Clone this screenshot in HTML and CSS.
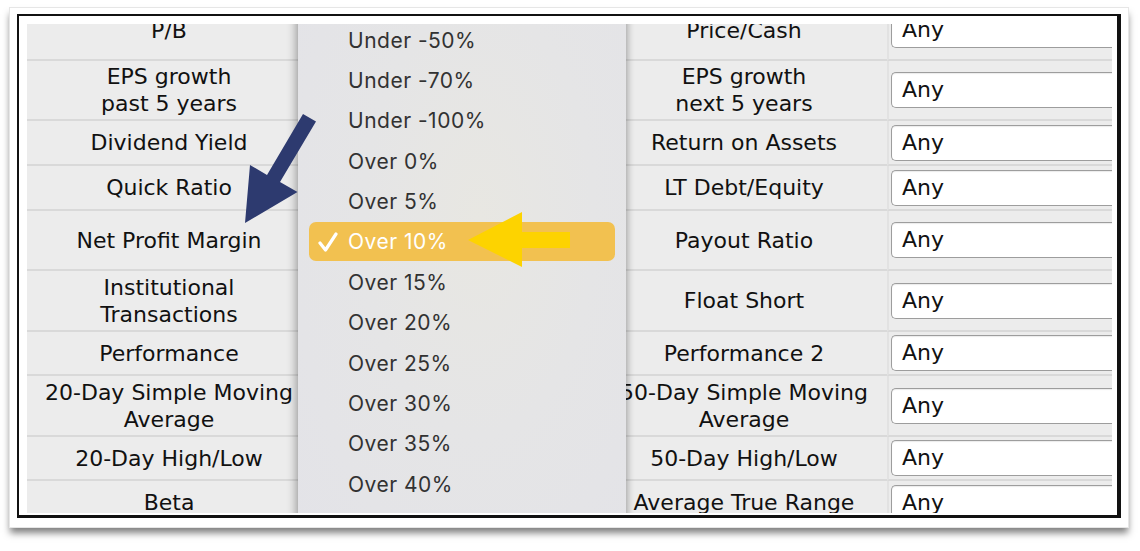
FILE: index.html
```html
<!DOCTYPE html>
<html>
<head>
<meta charset="utf-8">
<link rel="stylesheet" href="styles.css">
</head>
<body>
<div class="photo">
  <div class="frame">
    <div class="viewport">
      <div class="table">
        <div class="label">P/B</div><div class="pick"><div class="select"></div></div><div class="label">Price/Cash</div><div class="pick"><div class="select">Any</div></div>
        <div class="label">EPS growth<br>past 5 years</div><div class="pick"><div class="select"></div></div><div class="label">EPS growth<br>next 5 years</div><div class="pick"><div class="select">Any</div></div>
        <div class="label">Dividend Yield</div><div class="pick"><div class="select"></div></div><div class="label">Return on Assets</div><div class="pick"><div class="select">Any</div></div>
        <div class="label">Quick Ratio</div><div class="pick"><div class="select"></div></div><div class="label">LT Debt/Equity</div><div class="pick"><div class="select">Any</div></div>
        <div class="label">Net Profit Margin</div><div class="pick"><div class="select"></div></div><div class="label">Payout Ratio</div><div class="pick"><div class="select">Any</div></div>
        <div class="label">Institutional<br>Transactions</div><div class="pick"><div class="select"></div></div><div class="label">Float Short</div><div class="pick"><div class="select">Any</div></div>
        <div class="label">Performance</div><div class="pick"><div class="select"></div></div><div class="label">Performance 2</div><div class="pick"><div class="select">Any</div></div>
        <div class="label">20-Day Simple Moving<br>Average</div><div class="pick"><div class="select"></div></div><div class="label">50-Day Simple Moving<br>Average</div><div class="pick"><div class="select">Any</div></div>
        <div class="label">20-Day High/Low</div><div class="pick"><div class="select"></div></div><div class="label">50-Day High/Low</div><div class="pick"><div class="select">Any</div></div>
        <div class="label">Beta</div><div class="pick"><div class="select"></div></div><div class="label">Average True Range</div><div class="pick"><div class="select">Any</div></div>
      </div>

      <div class="menu">
        <div class="item">Under -50%</div>
        <div class="item">Under -70%</div>
        <div class="item">Under -100%</div>
        <div class="item">Over 0%</div>
        <div class="item">Over 5%</div>
        <div class="item selected"><svg class="check" viewBox="0 0 20 20" width="20" height="20"><path d="M2 11 L7.5 18 L18 2" fill="none" stroke="#fff" stroke-width="3.2" stroke-linecap="round" stroke-linejoin="round"/></svg>Over 10%</div>
        <div class="item">Over 15%</div>
        <div class="item">Over 20%</div>
        <div class="item">Over 25%</div>
        <div class="item">Over 30%</div>
        <div class="item">Over 35%</div>
        <div class="item">Over 40%</div>
      </div>

      <svg class="arrows" viewBox="27 24 1086 489" width="1086" height="489">
        <polygon fill="#2d3a6f" points="303,114 316,121.5 280,182 297.5,192 245,223 250,165 267,175"/>
        <polygon fill="#fdd300" points="468,240 522,212 522,232 570,232 570,248 522,248 522,267"/>
      </svg>
    </div>
  </div>
</div>
</body>
</html>
```

FILE: styles.css
```css
* { box-sizing: border-box; }

html, body {
  margin: 0;
  padding: 0;
  background: #ffffff;
}

body {
  width: 1140px;
  height: 551px;
  overflow: hidden;
  padding: 8px 0 0 10px;
}

.photo {
  width: 1118px;
  height: 519px;
  background: #ffffff;
  padding: 6px 0 0 7px;
  box-shadow: 0 0 0 1px #e6e6e6, 0 6px 7px rgba(0, 0, 0, 0.5);
}

.frame {
  width: 1104px;
  height: 504px;
  border: 3px solid #111111;
  border-top-width: 2px;
  border-left-width: 2px;
  border-right-width: 4px;
  padding: 8px 5px 2px 8px;
  background: #ffffff;
}

.viewport {
  position: relative;
  width: 1085px;
  height: 489px;
  overflow: hidden;
  background: #ececec;
}

.table {
  display: grid;
  grid-template-columns: 284px 290px 286px 260px;
  grid-template-rows: 60px 60px 45px 45px 60px 61px 44px 61px 44px 45px;
  margin-top: -23px;
  font-family: "DejaVu Sans", Verdana, sans-serif;
  font-size: 22px;
  color: #111111;
  background: #ececec;
}

.label {
  display: flex;
  align-items: center;
  justify-content: center;
  text-align: center;
  line-height: 27px;
  border-bottom: 2px solid #d9d9d9;
  white-space: nowrap;
}

.pick {
  display: flex;
  align-items: center;
  padding-left: 2px;
  border-bottom: 2px solid #d9d9d9;
  border-left: 2px solid #e2e2e2;
}

.select {
  width: 100%;
  height: 36px;
  display: flex;
  align-items: center;
  padding-left: 10px;
  background: #ffffff;
  border: 1px solid #9d9d9d;
  border-right: none;
  border-radius: 5px 0 0 5px;
  box-shadow: inset 0 1px 1px rgba(0, 0, 0, 0.08);
  line-height: 1;
}

.menu {
  position: absolute;
  left: 271px;
  top: -28px;
  width: 328px;
  height: 560px;
  padding: 24px 11px 0 11px;
  background: radial-gradient(ellipse at 55% 40%, #e8e7e2 0%, #e5e5e6 45%, #e3e3e8 100%);
  box-shadow: -3px 0 8px rgba(0, 0, 0, 0.28), 3px 0 6px rgba(0, 0, 0, 0.18);
  font-family: Inter, "Open Sans", sans-serif;
  font-size: 21px;
  color: #323232;
}

.item {
  height: 40.36px;
  display: flex;
  align-items: center;
  padding-left: 39px;
  position: relative;
  letter-spacing: 0.5px;
}

.item.selected {
  background: #f2c150;
  color: #ffffff;
  border-radius: 7px;
  height: 39px;
  margin: 0.7px 0;
}

.check {
  position: absolute;
  left: 9px;
  top: 10px;
}

.arrows {
  position: absolute;
  left: 0;
  top: 0;
}
```
